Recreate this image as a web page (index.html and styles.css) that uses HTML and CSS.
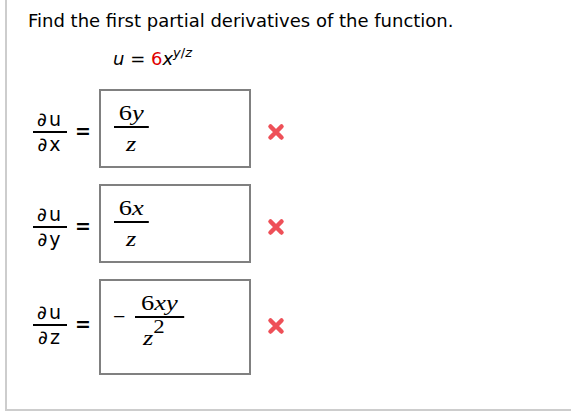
FILE: index.html
```html
<!DOCTYPE html>
<html>
<head>
<meta charset="utf-8">
<link rel="stylesheet" href="styles.css">
</head>
<body>
<div class="panel">
  <p class="title">Find the first partial derivatives of the function.</p>
  <div class="func"><i>u</i> = <span class="red">6</span><i>x</i><sup><i>y</i>/<i>z</i></sup></div>
  <div class="rows">
    <div class="row">
      <div class="lhs"><span class="num">∂u</span><span class="den">∂x</span></div>
      <span class="eq">=</span>
      <div class="box">
        <div class="frac"><span class="fnum">6<i>y</i></span><span class="fden"><i>z</i></span></div>
      </div>
      <svg class="wrong" viewBox="0 0 18 18" width="18" height="18"><path d="M3.5 3.5 L14.5 14.5 M14.5 3.5 L3.5 14.5"/></svg>
    </div>
    <div class="row">
      <div class="lhs"><span class="num">∂u</span><span class="den">∂y</span></div>
      <span class="eq">=</span>
      <div class="box">
        <div class="frac"><span class="fnum">6<i>x</i></span><span class="fden"><i>z</i></span></div>
      </div>
      <svg class="wrong" viewBox="0 0 18 18" width="18" height="18"><path d="M3.5 3.5 L14.5 14.5 M14.5 3.5 L3.5 14.5"/></svg>
    </div>
    <div class="row last">
      <div class="lhs"><span class="num">∂u</span><span class="den">∂z</span></div>
      <span class="eq">=</span>
      <div class="box tall">
        <span class="minus">−</span>
        <div class="frac"><span class="fnum">6<i>xy</i></span><span class="fden"><i>z</i><sup>2</sup></span></div>
      </div>
      <svg class="wrong" viewBox="0 0 18 18" width="18" height="18"><path d="M3.5 3.5 L14.5 14.5 M14.5 3.5 L3.5 14.5"/></svg>
    </div>
  </div>
</div>
</body>
</html>
```

FILE: styles.css
```css
html, body {
  margin: 0;
  padding: 0;
  background: #fff;
}
body {
  font-family: "DejaVu Sans", Verdana, sans-serif;
  color: #000;
}
.panel {
  margin-left: 5px;
  height: 409px;
  border-left: 2px solid #cdcdcd;
  border-bottom: 2px solid #cdcdcd;
}
.title {
  margin: 0;
  padding: 10px 0 0 21px;
  font-size: 18px;
  line-height: 21px;
}
.func {
  margin: 17px 0 0 106px;
  font-size: 18px;
  line-height: 21px;
}
.func sup {
  font-size: 13px;
  vertical-align: 8px;
  line-height: 0;
}
.red {
  color: #e00000;
}
.rows {
  margin-top: 20px;
  display: flex;
  flex-direction: column;
  gap: 16px;
}
.row {
  display: flex;
  align-items: flex-start;
  padding-left: 26px;
}
.lhs {
  display: flex;
  flex-direction: column;
  align-items: center;
  width: 34px;
  margin-top: 19px;
  font-size: 19px;
  line-height: 22px;
  letter-spacing: 2px;
}
.row.last .lhs {
  margin-top: 22px;
}
.lhs .num {
  border-bottom: 2px solid #000;
  width: 100%;
  text-align: center;
  padding-bottom: 1px;
}
.eq {
  font-size: 19px;
  line-height: 22px;
  margin: 31px 8px 0 8px;
  font-weight: bold;
}
.row.last .eq {
  margin-top: 34px;
}
.box {
  box-sizing: border-box;
  width: 152px;
  height: 79px;
  border: 2px solid #808080;
  padding: 9px 0 0 13px;
  display: flex;
  align-items: flex-start;
  font-family: "Liberation Serif", "Times New Roman", serif;
  font-size: 22px;
}
.box.tall {
  height: 96px;
  padding-left: 12px;
}
.frac {
  display: flex;
  flex-direction: column;
  align-items: center;
  transform: scaleX(1.2);
  transform-origin: left center;
}
.fnum {
  line-height: 26px;
  padding: 0 4px;
  border-bottom: 2px solid #000;
}
.fden {
  line-height: 26px;
  margin-top: 3px;
}
.tall .fnum {
  padding: 0 5px;
}
.tall .fden {
  margin-top: 7px;
  padding-right: 9px;
}
.fden sup {
  font-size: 19px;
  vertical-align: 12px;
  line-height: 0;
}
.minus {
  line-height: 26px;
  margin-top: 14px;
  margin-right: 10px;
}
.wrong {
  margin-left: 16px;
  margin-top: 34px;
  fill: none;
  stroke: #ee5058;
  stroke-width: 4.5;
  stroke-linecap: round;
}
.row.last .wrong {
  margin-top: 38px;
}
```
